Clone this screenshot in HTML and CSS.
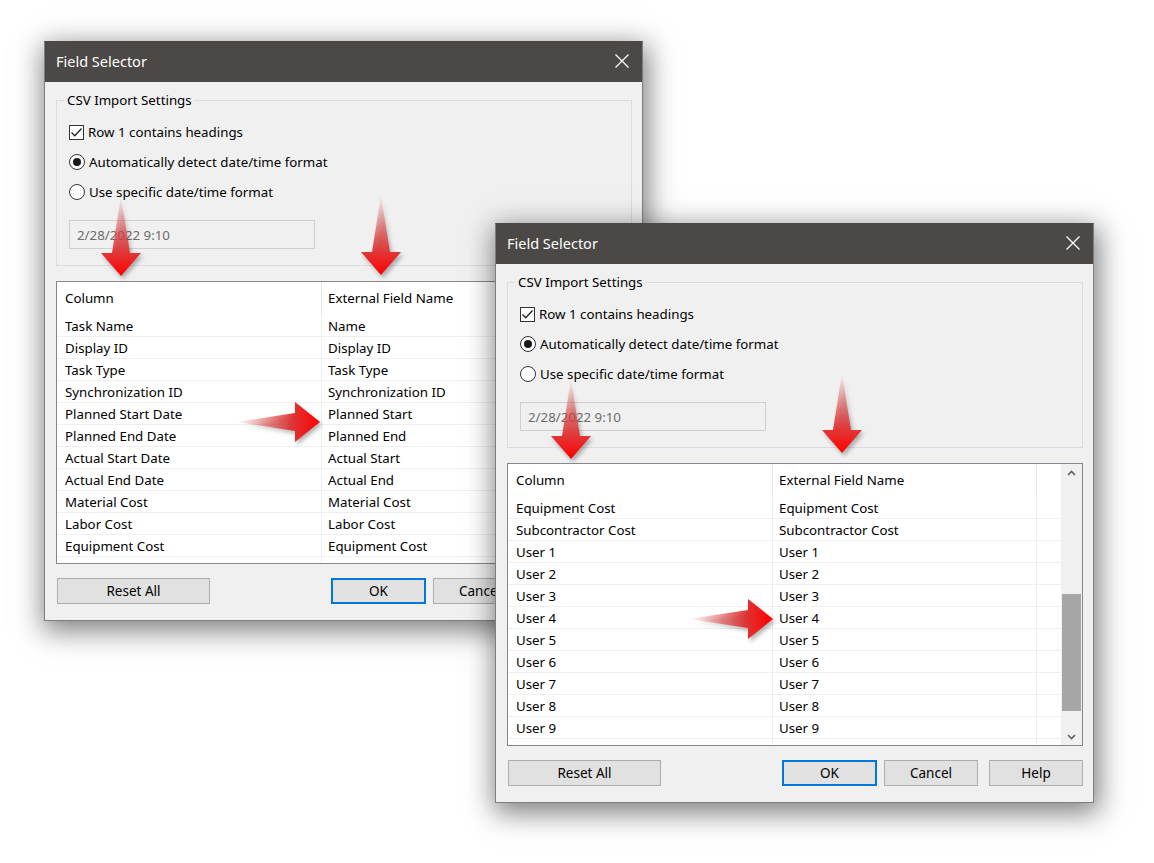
FILE: index.html
```html
<!DOCTYPE html>
<html>
<head>
<meta charset="utf-8">
<title>Field Selector</title>
<link rel="stylesheet" href="styles.css">
</head>
<body>
<div class="desk">

  <div class="dialog" id="d1">
    <div class="titlebar">
      <span>Field Selector</span>
      <svg class="close" width="14" height="14" viewBox="0 0 14 14"><path d="M0.5 0.5 L13.5 13.5 M13.5 0.5 L0.5 13.5" stroke="#fff" stroke-width="1.3"/></svg>
    </div>
    <div class="body">
      <fieldset class="group">
        <legend>CSV Import Settings</legend>
        <div class="opt"><span class="check"><svg width="13" height="13" viewBox="0 0 13 13"><polyline points="1.5,6.5 4.8,9.8 11.5,2.5" fill="none" stroke="#222" stroke-width="1.3"/></svg></span>Row 1 contains headings</div>
        <div class="opt"><span class="radio on"></span>Automatically detect date/time format</div>
        <div class="opt"><span class="radio"></span>Use specific date/time format</div>
        <div class="datebox">2/28/2022 9:10</div>
      </fieldset>
      <div class="list">
        <div class="grid">
          <div class="hdr"><div class="c1">Column</div><div class="c2">External Field Name</div><div class="c3"></div></div>
          <div class="row"><div class="c1">Task Name</div><div class="c2">Name</div><div class="c3"></div></div>
          <div class="row"><div class="c1">Display ID</div><div class="c2">Display ID</div><div class="c3"></div></div>
          <div class="row"><div class="c1">Task Type</div><div class="c2">Task Type</div><div class="c3"></div></div>
          <div class="row"><div class="c1">Synchronization ID</div><div class="c2">Synchronization ID</div><div class="c3"></div></div>
          <div class="row"><div class="c1">Planned Start Date</div><div class="c2">Planned Start</div><div class="c3"></div></div>
          <div class="row"><div class="c1">Planned End Date</div><div class="c2">Planned End</div><div class="c3"></div></div>
          <div class="row"><div class="c1">Actual Start Date</div><div class="c2">Actual Start</div><div class="c3"></div></div>
          <div class="row"><div class="c1">Actual End Date</div><div class="c2">Actual End</div><div class="c3"></div></div>
          <div class="row"><div class="c1">Material Cost</div><div class="c2">Material Cost</div><div class="c3"></div></div>
          <div class="row"><div class="c1">Labor Cost</div><div class="c2">Labor Cost</div><div class="c3"></div></div>
          <div class="row"><div class="c1">Equipment Cost</div><div class="c2">Equipment Cost</div><div class="c3"></div></div>
          <div class="row"><div class="c1"></div><div class="c2"></div><div class="c3"></div></div>
        </div>
        <div class="sb">
          <div class="sb-btn"><svg width="9" height="6" viewBox="0 0 9 6"><polyline points="1,5 4.5,1.5 8,5" fill="none" stroke="#606060" stroke-width="1.6"/></svg></div>
          <div class="sb-track top"><div class="thumb"></div></div>
          <div class="sb-btn"><svg width="9" height="6" viewBox="0 0 9 6"><polyline points="1,1 4.5,4.5 8,1" fill="none" stroke="#606060" stroke-width="1.6"/></svg></div>
        </div>
      </div>
      <div class="actions">
        <button class="btn reset">Reset All</button>
        <button class="btn ok">OK</button>
        <button class="btn cancel">Cancel</button>
        <button class="btn help">Help</button>
      </div>
    </div>
  </div>

  <div class="dialog" id="d2">
    <div class="titlebar">
      <span>Field Selector</span>
      <svg class="close" width="14" height="14" viewBox="0 0 14 14"><path d="M0.5 0.5 L13.5 13.5 M13.5 0.5 L0.5 13.5" stroke="#fff" stroke-width="1.3"/></svg>
    </div>
    <div class="body">
      <fieldset class="group">
        <legend>CSV Import Settings</legend>
        <div class="opt"><span class="check"><svg width="13" height="13" viewBox="0 0 13 13"><polyline points="1.5,6.5 4.8,9.8 11.5,2.5" fill="none" stroke="#222" stroke-width="1.3"/></svg></span>Row 1 contains headings</div>
        <div class="opt"><span class="radio on"></span>Automatically detect date/time format</div>
        <div class="opt"><span class="radio"></span>Use specific date/time format</div>
        <div class="datebox">2/28/2022 9:10</div>
      </fieldset>
      <div class="list">
        <div class="grid">
          <div class="hdr"><div class="c1">Column</div><div class="c2">External Field Name</div><div class="c3"></div></div>
          <div class="row"><div class="c1">Equipment Cost</div><div class="c2">Equipment Cost</div><div class="c3"></div></div>
          <div class="row"><div class="c1">Subcontractor Cost</div><div class="c2">Subcontractor Cost</div><div class="c3"></div></div>
          <div class="row"><div class="c1">User 1</div><div class="c2">User 1</div><div class="c3"></div></div>
          <div class="row"><div class="c1">User 2</div><div class="c2">User 2</div><div class="c3"></div></div>
          <div class="row"><div class="c1">User 3</div><div class="c2">User 3</div><div class="c3"></div></div>
          <div class="row"><div class="c1">User 4</div><div class="c2">User 4</div><div class="c3"></div></div>
          <div class="row"><div class="c1">User 5</div><div class="c2">User 5</div><div class="c3"></div></div>
          <div class="row"><div class="c1">User 6</div><div class="c2">User 6</div><div class="c3"></div></div>
          <div class="row"><div class="c1">User 7</div><div class="c2">User 7</div><div class="c3"></div></div>
          <div class="row"><div class="c1">User 8</div><div class="c2">User 8</div><div class="c3"></div></div>
          <div class="row"><div class="c1">User 9</div><div class="c2">User 9</div><div class="c3"></div></div>
          <div class="row"><div class="c1"></div><div class="c2"></div><div class="c3"></div></div>
        </div>
        <div class="sb">
          <div class="sb-btn"><svg width="9" height="6" viewBox="0 0 9 6"><polyline points="1,5 4.5,1.5 8,5" fill="none" stroke="#606060" stroke-width="1.6"/></svg></div>
          <div class="sb-track"><div class="thumb"></div></div>
          <div class="sb-btn"><svg width="9" height="6" viewBox="0 0 9 6"><polyline points="1,1 4.5,4.5 8,1" fill="none" stroke="#606060" stroke-width="1.6"/></svg></div>
        </div>
      </div>
      <div class="actions">
        <button class="btn reset">Reset All</button>
        <button class="btn ok">OK</button>
        <button class="btn cancel">Cancel</button>
        <button class="btn help">Help</button>
      </div>
    </div>
  </div>

  <!-- callout arrows -->
  <svg class="arrow down" id="a1" width="40" height="80" viewBox="0 0 40 80"><defs><linearGradient id="gd" x1="0" y1="0" x2="0" y2="1"><stop offset="0" stop-color="#e04848" stop-opacity="0"/><stop offset="0.7" stop-color="#e03838"/><stop offset="1" stop-color="#ff0000"/></linearGradient></defs><path d="M20 0 L29 57 L40 57 L20 80 L0 57 L11 57 Z" fill="url(#gd)"/></svg>
  <svg class="arrow down" id="a2" width="40" height="80" viewBox="0 0 40 80"><path d="M20 0 L29 57 L40 57 L20 80 L0 57 L11 57 Z" fill="url(#gd)"/></svg>
  <svg class="arrow right" id="a3" width="84" height="40" viewBox="0 0 84 40"><defs><linearGradient id="gr" x1="0" y1="0" x2="1" y2="0"><stop offset="0" stop-color="#e04848" stop-opacity="0"/><stop offset="0.7" stop-color="#e03030"/><stop offset="1" stop-color="#ff0000"/></linearGradient></defs><path d="M0 20 L59 11 L59 0 L84 20 L59 40 L59 29 Z" fill="url(#gr)"/></svg>
  <svg class="arrow down" id="a4" width="40" height="80" viewBox="0 0 40 80"><path d="M20 0 L29 57 L40 57 L20 80 L0 57 L11 57 Z" fill="url(#gd)"/></svg>
  <svg class="arrow down" id="a5" width="40" height="80" viewBox="0 0 40 80"><path d="M20 0 L29 57 L40 57 L20 80 L0 57 L11 57 Z" fill="url(#gd)"/></svg>
  <svg class="arrow right" id="a6" width="84" height="40" viewBox="0 0 84 40"><path d="M0 20 L59 11 L59 0 L84 20 L59 40 L59 29 Z" fill="url(#gr)"/></svg>

</div>
</body>
</html>
```

FILE: styles.css
```css
* {box-sizing: border-box}
html, body {
  margin: 0; padding: 0;
}
body {
  background: #fff;
  font-family: "Noto Sans", sans-serif;
  font-size: 13.3px;
  color: #000;
}

.desk {
  position: relative;
  width: 1154px;
  height: 863px;
  overflow: hidden;
}

/* windows */
.dialog {
  position: absolute;
  width: 599px;
  height: 580px;
  background: #f0f0f0;
  border: 1px solid #7e7e7e;
  border-top-color: #4b4845;
  box-shadow: 2px 7px 26px 3px rgba(0,0,0,0.5);
  display: flex;
  flex-direction: column;
}
#d1 { left: 44px; top: 41px; }
#d2 { left: 495px; top: 223px; }

.titlebar {
  height: 40px;
  flex: none;
  background: #4b4845;
  color: #fff;
  font-size: 14.5px;
  display: flex;
  align-items: center;
  justify-content: space-between;
  padding: 0 13px 2px 11px;
}
.close { display: block; }

.body {
  flex: 1;
  display: flex;
  flex-direction: column;
  padding: 9px 10px 0 11px;
}

/* group box */
.group {
  margin: 0;
  border: 1px solid #dcdcdc;
  padding: 8px 0 16px 12px;
}
.group legend {
  padding: 0 2px;
  margin-left: -4px;
  line-height: 18px;
}
.opt {
  height: 30px;
  display: flex;
  align-items: center;
  gap: 4px;
}
.check {
  width: 15px;
  height: 15px;
  border: 1px solid #333;
  background: #fff;
  display: flex;
  align-items: center;
  justify-content: center;
}
.check svg { display: block; }
.radio {
  width: 16px;
  height: 16px;
  border: 1px solid #333;
  border-radius: 50%;
  background: #fff;
  display: flex;
  align-items: center;
  justify-content: center;
}
.radio.on::after {
  content: "";
  width: 8px;
  height: 8px;
  border-radius: 50%;
  background: #1a1a1a;
}
.datebox {
  margin-top: 13px;
  width: 246px;
  height: 29px;
  border: 1px solid #d0d0d0;
  background: #f0f0f0;
  color: #6d6d6d;
  padding-left: 7px;
  display: flex;
  align-items: center;
}

/* list view */
.list {
  margin-top: 15px;
  height: 283px;
  flex: none;
  border: 1px solid #828790;
  background: #fff;
  display: flex;
}
.grid {
  flex: 1;
  display: flex;
  flex-direction: column;
  overflow: hidden;
}
.hdr {
  display: flex;
  height: 33px;
  flex: none;
}
.hdr > div {
  display: flex;
  align-items: center;
  padding-bottom: 1px;
}
.hdr .c2, .hdr .c3 {
  border-left: 1px solid #e5e5e5;
}
.row {
  display: flex;
  height: 22px;
  flex: none;
}
.row > div {
  border-bottom: 1px solid #efefef;
  padding-top: 1px;
  line-height: 20px;
  white-space: nowrap;
}
.row .c2, .row .c3 {
  border-left: 1px solid #efefef;
}
.c1 { width: 264px; padding-left: 8px; }
.c2 { width: 264px; padding-left: 6px; }
.c3 { flex: 1; }

.sb {
  width: 21px;
  flex: none;
  background: #f0f0f0;
  display: flex;
  flex-direction: column;
}
.sb-btn {
  height: 17px;
  display: flex;
  align-items: center;
  justify-content: center;
}
.sb-track {
  flex: 1;
  padding: 113px 1px 0 1px;
}
.sb-track.top { padding-top: 0; }
.thumb {
  height: 117px;
  background: #a6a6a6;
}

/* buttons */
.actions {
  margin-top: 14px;
  height: 26px;
  display: flex;
}
.btn {
  height: 26px;
  padding: 0;
  font-family: inherit;
  font-size: 13.5px;
  color: #000;
  background: #e1e1e1;
  border: 1px solid #adadad;
}
.reset { width: 153px; margin-left: 1px; margin-right: auto; }
.ok { width: 95px; border: 2px solid #0078d7; }
.cancel { width: 94px; margin-left: 7px; }
.help { width: 94px; margin-left: 11px; }

/* red callouts drawn over the dialogs */
.arrow {
  position: absolute;
  filter: drop-shadow(2px 3px 2px rgba(0,0,0,0.3));
}
#a1 { left: 101px; top: 196px; }
#a2 { left: 361px; top: 195px; }
#a3 { left: 236px; top: 402px; }
#a4 { left: 551px; top: 379px; }
#a5 { left: 822px; top: 373px; }
#a6 { left: 689px; top: 599px; }
```
